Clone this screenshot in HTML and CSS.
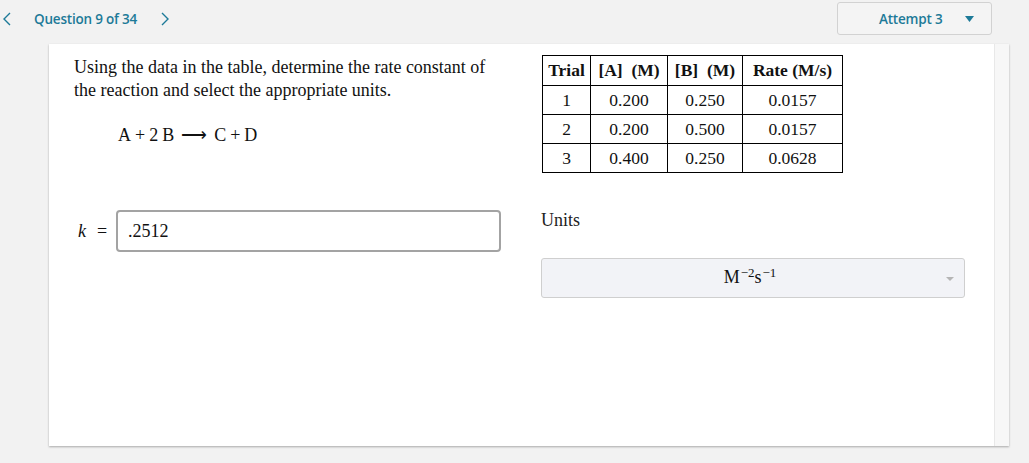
FILE: index.html
```html
<!DOCTYPE html>
<html>
<head>
<meta charset="utf-8">
<link rel="stylesheet" href="styles.css">
</head>
<body>
<header class="topbar">
  <div class="nav">
    <svg class="chev" width="8" height="14" viewBox="0 0 8 14"><path d="M7 1 L1 7 L7 13" fill="none" stroke="#1d7a98" stroke-width="1.4"/></svg>
    <span class="qtitle">Question 9 of 34</span>
    <svg class="chev next" width="8" height="14" viewBox="0 0 8 14"><path d="M1 1 L7 7 L1 13" fill="none" stroke="#1d7a98" stroke-width="1.4"/></svg>
  </div>
  <button class="attempt"><span>Attempt 3</span><svg width="9" height="6" viewBox="0 0 9 6"><path d="M0 0 H9 L4.5 6 Z" fill="#1d7a98"/></svg></button>
</header>
<main class="card">
  <div class="content">
    <div class="grid">
      <div class="prompt">
        <p class="qtext">Using the data in the table, determine the rate constant of the reaction and select the appropriate units.</p>
        <p class="eq">A<span class="op">+</span>2<span class="th"></span>B<span class="op arrow">⟶</span>C<span class="op">+</span>D</p>
      </div>
      <table class="data">
        <tr><th>Trial</th><th>[A]&nbsp; (M)</th><th>[B]&nbsp; (M)</th><th>Rate (M/s)</th></tr>
        <tr><td>1</td><td>0.200</td><td>0.250</td><td>0.0157</td></tr>
        <tr><td>2</td><td>0.200</td><td>0.500</td><td>0.0157</td></tr>
        <tr><td>3</td><td>0.400</td><td>0.250</td><td>0.0628</td></tr>
      </table>
      <div class="kfield">
        <span class="klabel"><i>k</i><span class="eqs">=</span></span>
        <div class="kinput">.2512</div>
      </div>
      <div class="units">
        <div class="ulabel">Units</div>
        <div class="select"><span class="uval">M<sup>−2</sup>s<sup>−1</sup></span><svg class="caret" width="8" height="4" viewBox="0 0 8 4"><path d="M0 0 H8 L4 4 Z" fill="#b5b5b5"/></svg></div>
      </div>
    </div>
  </div>
  <div class="track"></div>
</main>
</body>
</html>
```
FILE: styles.css
```css
html, body { margin: 0; padding: 0; }
body {
  background: #f2f2f2;
  width: 1029px;
  height: 463px;
  overflow: hidden;
  font-family: "Liberation Serif", "Times New Roman", serif;
  color: #111;
}
.topbar {
  height: 44px;
  display: flex;
  justify-content: space-between;
  align-items: flex-start;
  font-family: "Open Sans", "Lato", sans-serif;
}
.nav {
  display: flex;
  align-items: center;
  height: 37px;
  padding-left: 3px;
}
.qtitle {
  color: #1d7a98;
  font-weight: 600;
  font-size: 13.5px;
  margin-left: 23px;
  letter-spacing: -0.2px;
}
.chev.next { margin-left: 24px; }
.attempt {
  margin: 2px 37px 0 0;
  width: 155px;
  height: 33px;
  box-sizing: border-box;
  background: #f4f4f4;
  border: 1px solid #d2d2d2;
  border-radius: 3px;
  display: flex;
  align-items: center;
  padding: 0 17px 0 41px;
  justify-content: space-between;
  font-family: "Open Sans", "Lato", sans-serif;
  font-weight: 600;
  font-size: 13.5px;
  color: #1d7a98;
  letter-spacing: -0.2px;
}
.card {
  margin-left: 49px;
  width: 960px;
  height: 402px;
  display: flex;
  background: #fff;
  box-shadow: 0 1px 2px rgba(0,0,0,0.3);
}
.content {
  flex: 1;
  padding: 11px 0 0 25px;
}
.track {
  width: 14px;
  background: #f7f7f7;
  border-left: 1px solid #e8e8e8;
}
.grid {
  display: grid;
  grid-template-columns: 467px 424px;
  grid-template-rows: 155px auto;
}
.prompt { padding-top: 1px; }
.qtext {
  margin: 0;
  width: 430px;
  font-size: 18px;
  line-height: 23px;
}
.eq {
  margin: 23px 0 0 44px;
  font-size: 18px;
  line-height: 20px;
  display: flex;
  align-items: baseline;
}
.op { margin: 0 4px; }
.th { width: 4px; }
.arrow { margin: 0 7px 0 7px; }
.data {
  border-collapse: collapse;
  align-self: start;
  justify-self: start;
  margin-left: 1px;
  font-size: 17.5px;
}
.data th, .data td {
  border: 1px solid #000;
  height: 28px;
  padding: 0;
  text-align: center;
}
.data th { font-weight: bold; height: 29px; }
.data th:nth-child(1) { width: 47px; }
.data th:nth-child(2) { width: 76px; }
.data th:nth-child(3) { width: 74px; }
.data th:nth-child(4) { width: 99px; }
.kfield {
  display: flex;
  align-items: center;
  height: 42px;
}
.klabel {
  font-size: 18px;
  width: 42px;
  padding-left: 4px;
  box-sizing: border-box;
  display: flex;
}
.eqs { margin-left: 11px; }
.kinput {
  width: 385px;
  height: 42px;
  box-sizing: border-box;
  border: 2px solid #a3a3a3;
  border-radius: 4px;
  font-size: 18px;
  line-height: 20px;
  padding: 9px 0 0 10px;
}
.ulabel {
  font-size: 18px;
  line-height: 20px;
  color: #222;
}
.select {
  margin-top: 28px;
  width: 424px;
  height: 40px;
  box-sizing: border-box;
  background: #f2f3f7;
  border: 1px solid #cfcfcf;
  border-radius: 3px;
  display: flex;
  align-items: center;
  justify-content: center;
  position: relative;
  font-size: 18px;
}
.uval { line-height: 20px; padding-right: 6px; }
.select sup { font-size: 13px; vertical-align: 0; position: relative; top: -6px; margin-left: 1px; }
.caret { position: absolute; right: 10px; top: 18px; }
```
